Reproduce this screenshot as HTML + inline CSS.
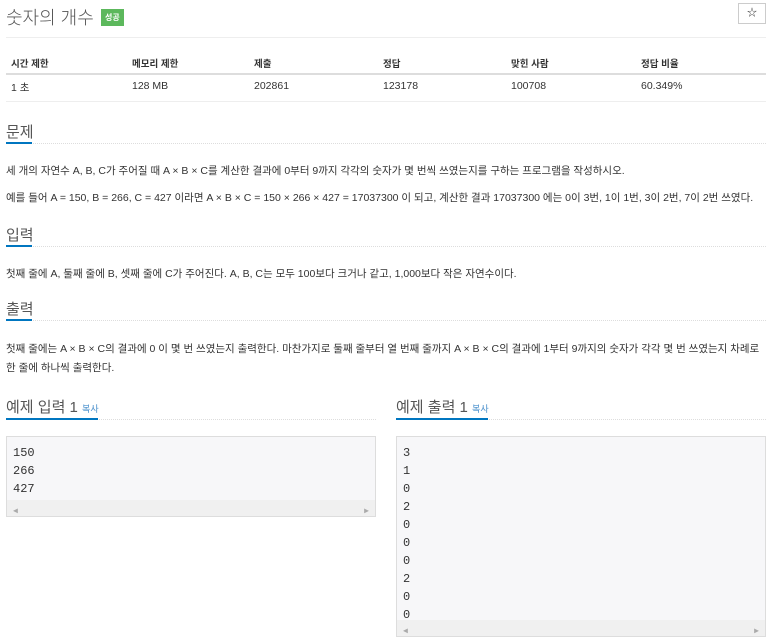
<!DOCTYPE html>
<html><head><meta charset="utf-8"><style>
*{box-sizing:border-box;margin:0;padding:0}
body{width:772px;height:642px;overflow:hidden;background:#fff;font-family:"Liberation Sans","Noto Sans CJK KR",sans-serif;color:#333;font-size:11px;position:relative}
.a{position:absolute}
.title{left:6px;top:4px;font-size:18px;color:#555;font-weight:300}
.badge{left:101px;top:9px;background:#5cb85c;color:#fff;font-size:8px;padding:3px 4px;font-weight:bold}
.star{left:738px;top:3px;width:28px;height:21px;border:1px solid #ccc;text-align:center;font-size:10px;line-height:19px}
.hr{height:1px;background:#eee}
.th{top:56px;font-weight:bold;font-size:9.5px}
.td{top:80px;font-size:10.5px}
.h{font-size:15px;color:#555;left:6px}
.ul{left:6px;height:2px;background:#0076c0}
.dl{height:1px;border-top:1px dotted #ddd}
.p{left:6px;font-size:10.5px;color:#333}
.pre{background:#f7f7f9;border:1px solid #ddd;font-family:"Liberation Mono",monospace;font-size:12px;line-height:18px;padding:7px 6px}
.sb{position:absolute;left:0;right:0;bottom:0;height:16px;background:#f0f0f0;color:#aaa;font-size:8px}
</style></head><body>
<div class="a title">숫자의 개수</div>
<div class="a badge">성공</div>
<div class="a star">☆</div>
<div class="a hr" style="left:6px;width:760px;top:37px"></div>
<div class="a th" style="left:11px">시간 제한</div>
<div class="a th" style="left:132px">메모리 제한</div>
<div class="a th" style="left:254px">제출</div>
<div class="a th" style="left:383px">정답</div>
<div class="a th" style="left:511px">맞힌 사람</div>
<div class="a th" style="left:641px">정답 비율</div>
<div class="a" style="left:6px;width:760px;top:73px;height:2px;background:#ddd"></div>
<div class="a td" style="left:11px">1 초</div>
<div class="a td" style="left:132px">128 MB</div>
<div class="a td" style="left:254px">202861</div>
<div class="a td" style="left:383px">123178</div>
<div class="a td" style="left:511px">100708</div>
<div class="a td" style="left:641px">60.349%</div>
<div class="a hr" style="left:6px;width:760px;top:101px"></div>

<div class="a h" style="top:121px">문제</div>
<div class="a dl" style="left:6px;width:760px;top:143px"></div>
<div class="a ul" style="top:142px;width:26px"></div>
<div class="a p" style="top:163px">세 개의 자연수 A, B, C가 주어질 때 A × B × C를 계산한 결과에 0부터 9까지 각각의 숫자가 몇 번씩 쓰였는지를 구하는 프로그램을 작성하시오.</div>
<div class="a p" style="top:190px;white-space:nowrap">예를 들어 A = 150, B = 266, C = 427 이라면 A × B × C = 150 × 266 × 427 = 17037300 이 되고, 계산한 결과 17037300 에는 0이 3번, 1이 1번, 3이 2번, 7이 2번 쓰였다.</div>

<div class="a h" style="top:224px">입력</div>
<div class="a dl" style="left:6px;width:760px;top:246px"></div>
<div class="a ul" style="top:245px;width:26px"></div>
<div class="a p" style="top:266px">첫째 줄에 A, 둘째 줄에 B, 셋째 줄에 C가 주어진다. A, B, C는 모두 100보다 크거나 같고, 1,000보다 작은 자연수이다.</div>

<div class="a h" style="top:298px">출력</div>
<div class="a dl" style="left:6px;width:760px;top:320px"></div>
<div class="a ul" style="top:319px;width:26px"></div>
<div class="a p" style="top:340px;width:762px;line-height:19px">첫째 줄에는 A × B × C의 결과에 0 이 몇 번 쓰였는지 출력한다. 마찬가지로 둘째 줄부터 열 번째 줄까지 A × B × C의 결과에 1부터 9까지의 숫자가 각각 몇 번 쓰였는지 차례로 한 줄에 하나씩 출력한다.</div>

<div class="a h" style="top:396px">예제 입력 1 <span style="font-size:9px;color:#428bca">복사</span></div>
<div class="a dl" style="left:6px;width:370px;top:419px"></div>
<div class="a ul" style="top:418px;width:92px"></div>
<div class="a h" style="top:396px;left:396px">예제 출력 1 <span style="font-size:9px;color:#428bca">복사</span></div>
<div class="a dl" style="left:396px;width:370px;top:419px"></div>
<div class="a ul" style="top:418px;left:396px;width:92px"></div>

<div class="a pre" style="left:6px;top:436px;width:370px;height:81px">150<br>266<br>427<div class="sb"><span style="position:absolute;left:6px;top:3px">◀</span><span style="position:absolute;right:6px;top:3px">▶</span></div></div>
<div class="a pre" style="left:396px;top:436px;width:370px;height:201px">3<br>1<br>0<br>2<br>0<br>0<br>0<br>2<br>0<br>0<div class="sb"><span style="position:absolute;left:6px;top:3px">◀</span><span style="position:absolute;right:6px;top:3px">▶</span></div></div>
</body></html>
